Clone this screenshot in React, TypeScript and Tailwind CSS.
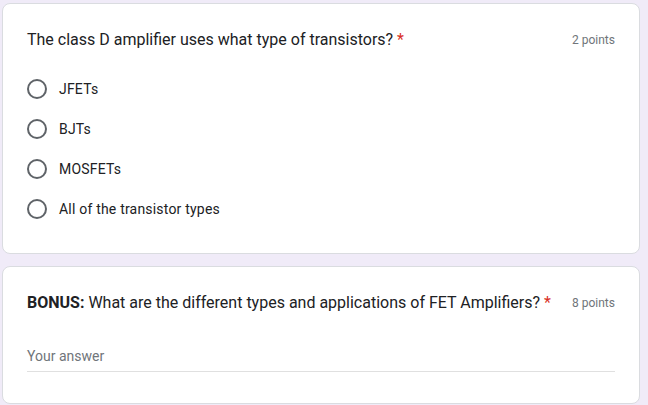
const options = ["JFETs", "BJTs", "MOSFETs", "All of the transistor types"];

function Points({ value }: { value: number }) {
  return (
    <span className="shrink-0 pl-4 text-xs leading-6 text-[#70757a]">{value} points</span>
  );
}

export default function App() {
  return (
    <div
      className="min-h-[405px] bg-[#f0ebf8] pt-[3px] pl-[2px] pr-[8px] flex flex-col gap-3"
      style={{ fontFamily: "Roboto, 'Liberation Sans', sans-serif" }}
    >
      {/* Question 1 */}
      <div className="bg-white border border-[#dadce0] rounded-lg px-6 pt-6 pb-6">
        <div className="flex items-start justify-between">
          <div className="text-base leading-6 text-[#202124]">
            The class D amplifier uses what type of transistors?
            <span className="text-[#d93025]"> *</span>
          </div>
          <Points value={2} />
        </div>
        <div className="mt-[17px] flex flex-col">
          {options.map((opt) => (
            <label key={opt} className="h-10 flex items-center gap-3 cursor-pointer">
              <span className="w-5 h-5 rounded-full border-2 border-[#5f6368] shrink-0" />
              <span className="text-sm tracking-[0.2px] text-[#202124]">{opt}</span>
            </label>
          ))}
        </div>
      </div>

      {/* Question 2 */}
      <div className="bg-white border border-[#dadce0] rounded-lg px-6 pt-6 pb-[31px]">
        <div className="flex items-start justify-between">
          <div className="text-base leading-6 text-[#202124]">
            <span className="font-bold">BONUS:</span> What are the different types and applications of FET Amplifiers?
            <span className="text-[#d93025]"> *</span>
          </div>
          <Points value={8} />
        </div>
        <div className="mt-[25px] h-8 border-b border-[#e0e0e0] flex items-center">
          <span className="text-sm text-[#70757a]">Your answer</span>
        </div>
      </div>
    </div>
  );
}
